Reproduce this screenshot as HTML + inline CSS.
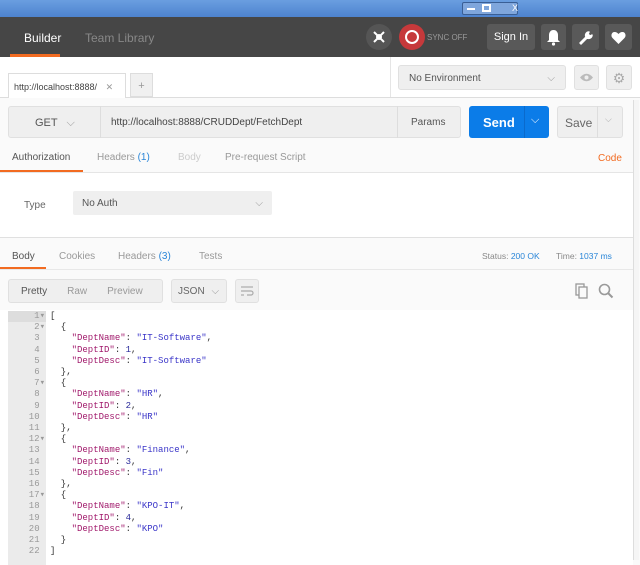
<!DOCTYPE html><html><head><style>
*{margin:0;padding:0;box-sizing:border-box}
body{width:640px;height:565px;overflow:hidden;background:#fafafa;font-family:"Liberation Sans",sans-serif;font-size:11px;color:#505050;position:relative}
.a{position:absolute}
.title{left:0;top:0;width:640px;height:17px;background:linear-gradient(#6a9ee0,#4d83cf)}
.dark{left:0;top:17px;width:640px;height:40px;background:#464646}
.btn{background:#595959;border-radius:3px}
.box{background:#efefef;border:1px solid #e0e0e0;border-radius:3px}
.code{font-family:"Liberation Mono",monospace;font-size:9px;line-height:11.2px;white-space:pre}
.k{color:#a11a6c}.s{color:#3a35c8}.n{color:#2a2a9a}
</style></head><body>
<div class="a title"></div>
<div class="a" style="left:462px;top:2px;width:56px;height:13px;border:1px solid #3a5f95;border-radius:2px;background:#7fa6dc"></div>
<div class="a" style="left:467px;top:8px;width:8px;height:2px;background:#fff"></div>
<div class="a" style="left:482px;top:4px;width:9px;height:8px;border:2px solid #fff"></div>
<div class="a" style="left:504px;top:2px;width:22px;height:13px;color:#fff;font-size:9px;text-align:center;line-height:13px">X</div>
<div class="a dark"></div>
<div class="a" style="left:24px;top:31px;color:#fff;font-size:12px">Builder</div>
<div class="a" style="left:10px;top:54px;width:50px;height:3px;background:#f26b21"></div>
<div class="a" style="left:85px;top:31px;color:#888;font-size:12px">Team Library</div>
<div class="a" style="left:366px;top:24px;width:26px;height:26px;border-radius:50%;background:#555"><svg width="26" height="26"><g stroke="#fff" stroke-width="2"><line x1="8" y1="8" x2="18" y2="18"/><line x1="18" y1="8" x2="8" y2="18"/></g><circle cx="13" cy="13" r="3" fill="#fff"/></svg></div>
<div class="a" style="left:399px;top:24px;width:26px;height:26px;border-radius:50%;background:#c6393b"><div class="a" style="left:6px;top:6px;width:14px;height:14px;border:2px solid #fff;border-radius:50%"></div></div>
<div class="a" style="left:427px;top:33px;color:#999;font-size:8px">SYNC OFF</div>
<div class="a btn" style="left:487px;top:24px;width:48px;height:26px;color:#fff;text-align:center;line-height:26px;font-size:11px">Sign In</div>
<div class="a btn" style="left:541px;top:24px;width:25px;height:26px"><svg width="25" height="26"><path d="M12.5 6c-3 0-4.5 2.5-4.5 5v5l-2 2h13l-2-2v-5c0-2.5-1.5-5-4.5-5z" fill="#fff"/><circle cx="12.5" cy="20" r="1.6" fill="#fff"/></svg></div>
<div class="a btn" style="left:572px;top:24px;width:27px;height:26px"><svg width="27" height="26"><path d="M9 20l6-6c2 1 5 0 5-3l-2 1-2-2 1-2c-3 0-4 3-3 5l-6 6z" fill="#fff" stroke="#fff" stroke-width="1.5" stroke-linejoin="round"/></svg></div>
<div class="a btn" style="left:605px;top:24px;width:27px;height:26px"><svg width="27" height="26"><path d="M13.5 20l-6-6c-2-2-1-6 2-6 2 0 3 1 4 2 1-1 2-2 4-2 3 0 4 4 2 6z" fill="#fff"/></svg></div>
<div class="a" style="left:0;top:57px;width:640px;height:40px;background:#fff"></div>
<div class="a" style="left:390px;top:57px;width:1px;height:40px;background:#e5e5e5"></div>
<div class="a" style="left:0;top:97px;width:640px;height:1px;background:#ddd"></div>
<div class="a" style="left:8px;top:73px;width:118px;height:25px;background:#fff;border:1px solid #ddd;border-bottom:none;font-size:9px;padding:8px 5px;color:#444">http://localhost:8888/ <span style="color:#999;margin-left:6px">✕</span></div>
<div class="a" style="left:130px;top:73px;width:23px;height:24px;background:#f0f0f0;border:1px solid #ddd;text-align:center;line-height:24px;color:#999">+</div>
<div class="a box" style="left:398px;top:65px;width:168px;height:25px;padding:7px 10px;font-size:10px;color:#555">No Environment<span style="float:right;color:#999">⌵</span></div>
<div class="a box" style="left:574px;top:65px;width:25px;height:25px"><svg width="23" height="23"><path d="M5 11.5c4-5 9-5 13 0c-4 5-9 5-13 0z" fill="#bbb"/><circle cx="11.5" cy="11.5" r="2" fill="#efefef"/></svg></div>
<div class="a box" style="left:606px;top:65px;width:26px;height:25px;color:#aaa;text-align:center;line-height:24px;font-size:14px">⚙</div>
<div class="a" style="left:633px;top:100px;width:6px;height:460px;border-left:1px solid #ddd;background:#f5f5f5"></div>
<div class="a box" style="left:8px;top:106px;width:453px;height:32px"></div>
<div class="a" style="left:35px;top:117px;font-size:11px;color:#555">GET <span style="color:#999;margin-left:6px">⌵</span></div>
<div class="a" style="left:100px;top:106px;width:1px;height:32px;background:#ddd"></div>
<div class="a" style="left:111px;top:117px;font-size:10px;color:#444">http://localhost:8888/CRUDDept/FetchDept</div>
<div class="a" style="left:397px;top:106px;width:1px;height:32px;background:#ddd"></div>
<div class="a" style="left:411px;top:117px;font-size:10px;color:#555">Params</div>
<div class="a" style="left:469px;top:106px;width:80px;height:32px;background:#0b7ce8;border-radius:3px"></div>
<div class="a" style="left:483px;top:115px;color:#fff;font-size:13px;font-weight:bold">Send</div>
<div class="a" style="left:524px;top:106px;width:1px;height:32px;background:#0a6acc"></div>
<div class="a" style="left:531px;top:114px;color:#fff">⌵</div>
<div class="a box" style="left:557px;top:106px;width:66px;height:32px"></div>
<div class="a" style="left:565px;top:116px;font-size:12px;color:#666">Save</div>
<div class="a" style="left:597px;top:106px;width:1px;height:32px;background:#ddd"></div>
<div class="a" style="left:605px;top:114px;color:#aaa;font-size:9px">⌵</div>
<div class="a" style="left:12px;top:152px;font-size:10px;color:#555">Authorization</div>
<div class="a" style="left:97px;top:152px;font-size:10px;color:#999">Headers <span style="color:#2a86d8">(1)</span></div>
<div class="a" style="left:178px;top:152px;font-size:10px;color:#ccc">Body</div>
<div class="a" style="left:225px;top:152px;font-size:10px;color:#999">Pre-request Script</div>
<div class="a" style="left:598px;top:153px;font-size:10px;color:#f26b21">Code</div>
<div class="a" style="left:0;top:172px;width:633px;height:1px;background:#e5e5e5"></div>
<div class="a" style="left:0;top:170px;width:83px;height:2px;background:#f26b21"></div>
<div class="a" style="left:0;top:173px;width:633px;height:64px;background:#fff"></div>
<div class="a" style="left:24px;top:200px;font-size:10px;color:#666">Type</div>
<div class="a" style="left:73px;top:191px;width:199px;height:24px;background:#efefef;border-radius:2px;padding:7px 9px;font-size:10px;color:#555">No Auth<span style="float:right;color:#999">⌵</span></div>
<div class="a" style="left:0;top:237px;width:633px;height:1px;background:#e0e0e0"></div>
<div class="a" style="left:12px;top:251px;font-size:10px;color:#555">Body</div>
<div class="a" style="left:0;top:267px;width:46px;height:2px;background:#f26b21"></div>
<div class="a" style="left:59px;top:251px;font-size:10px;color:#999">Cookies</div>
<div class="a" style="left:118px;top:251px;font-size:10px;color:#999">Headers <span style="color:#2a86d8">(3)</span></div>
<div class="a" style="left:199px;top:251px;font-size:10px;color:#999">Tests</div>
<div class="a" style="left:482px;top:251px;font-size:8.5px;color:#888">Status: <span style="color:#2a86d8">200 OK</span></div>
<div class="a" style="left:556px;top:251px;font-size:8.5px;color:#888">Time: <span style="color:#2a86d8">1037 ms</span></div>
<div class="a" style="left:0;top:269px;width:633px;height:1px;background:#e8e8e8"></div>
<div class="a box" style="left:8px;top:279px;width:155px;height:24px;font-size:10px;padding:6px 12px"><span style="color:#555">Pretty</span><span style="color:#999;margin-left:20px">Raw</span><span style="color:#999;margin-left:20px">Preview</span></div>
<div class="a box" style="left:171px;top:279px;width:56px;height:24px;font-size:10px;padding:6px 6px;color:#666">JSON <span style="color:#999;margin-left:4px">⌵</span></div>
<div class="a box" style="left:235px;top:279px;width:24px;height:24px"><svg width="22" height="22"><g stroke="#aaa" stroke-width="1.2" fill="none"><line x1="5" y1="7" x2="17" y2="7"/><path d="M5 11h10a2 2 0 0 1 0 4h-4"/><line x1="5" y1="15" x2="8" y2="15"/></g></svg></div>
<div class="a" style="left:574px;top:282px"><svg width="16" height="18"><g stroke="#999" stroke-width="1.3" fill="#fafafa"><rect x="2" y="2" width="8" height="11"/><rect x="5" y="5" width="8" height="11"/></g></svg></div>
<div class="a" style="left:597px;top:282px"><svg width="18" height="18"><circle cx="7.5" cy="7.5" r="5" stroke="#999" stroke-width="1.6" fill="none"/><line x1="11" y1="11" x2="15.5" y2="15.5" stroke="#999" stroke-width="2"/></svg></div>
<div class="a" style="left:0;top:310px;width:633px;height:255px;background:#fff"></div>
<div class="a" style="left:8px;top:311px;width:38px;height:254px;background:#ebebeb"></div>
<div class="a" style="left:8px;top:311px;width:38px;height:11px;background:#ddd"></div>
<div class="a code" style="left:8px;top:311px;width:38px;text-align:right;color:#999;padding-right:1px">1▾
2▾
3 
4 
5 
6 
7▾
8 
9 
10 
11 
12▾
13 
14 
15 
16 
17▾
18 
19 
20 
21 
22 </div>
<div class="a code" style="left:50px;top:311px;color:#333">[
  {
    <span class="k">"DeptName"</span>: <span class="s">"IT-Software"</span>,
    <span class="k">"DeptID"</span>: <span class="n">1</span>,
    <span class="k">"DeptDesc"</span>: <span class="s">"IT-Software"</span>
  },
  {
    <span class="k">"DeptName"</span>: <span class="s">"HR"</span>,
    <span class="k">"DeptID"</span>: <span class="n">2</span>,
    <span class="k">"DeptDesc"</span>: <span class="s">"HR"</span>
  },
  {
    <span class="k">"DeptName"</span>: <span class="s">"Finance"</span>,
    <span class="k">"DeptID"</span>: <span class="n">3</span>,
    <span class="k">"DeptDesc"</span>: <span class="s">"Fin"</span>
  },
  {
    <span class="k">"DeptName"</span>: <span class="s">"KPO-IT"</span>,
    <span class="k">"DeptID"</span>: <span class="n">4</span>,
    <span class="k">"DeptDesc"</span>: <span class="s">"KPO"</span>
  }
]</div>
</body></html>
